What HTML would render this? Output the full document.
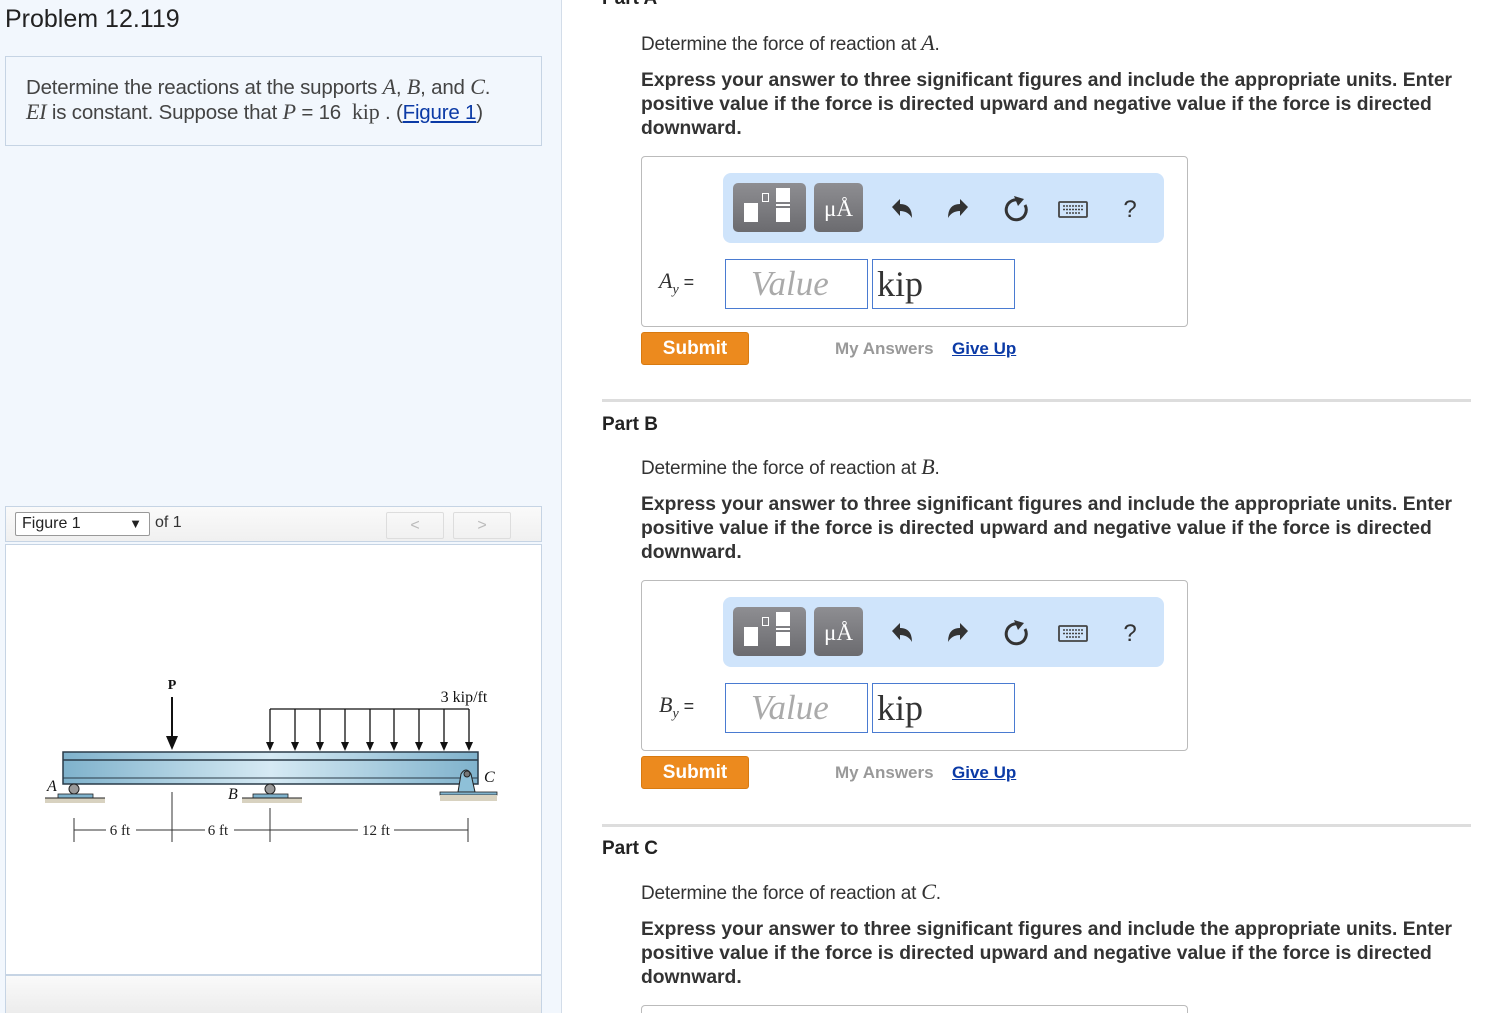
<!DOCTYPE html>
<html><head><meta charset="utf-8"><style>
*{margin:0;padding:0;box-sizing:border-box}
html,body{width:1492px;height:1013px;overflow:hidden}
body{background:#fff;font-family:"Liberation Sans",Arial,sans-serif;color:#333;position:relative}
.abs{position:absolute}
.left{left:0;top:0;width:562px;height:1013px;background:#f2f7fd;border-right:1px solid #d3dde9}
.m{font-family:"Liberation Serif",serif;font-style:italic;font-size:22px}
.ph{font-weight:bold;font-size:19px;color:#222}
.det{font-size:19px;color:#333;letter-spacing:-0.2px}
.exp{font-weight:bold;font-size:19.3px;line-height:24px;color:#333;width:835px}
.box{width:547px;height:171px;border:1px solid #bbb;border-radius:4px;background:#fff}
.tb{width:441px;height:70px;background:#cfe4fb;border-radius:8px}
.gb{background:linear-gradient(#8e8e92,#6b6b6f);border-radius:5px;height:49px}
.inp{height:50px;border:1.5px solid #4a7bd1;background:#fff;font-family:"Liberation Serif",serif;font-size:36px}
.sub{width:108px;height:33px;background:#ec8a1e;border:1px solid #d87a10;border-radius:3px;color:#fff;font-weight:bold;font-size:19px;text-align:center;line-height:31px}
.ma{font-weight:bold;font-size:17px;color:#999}
.gu{font-weight:bold;font-size:17px;color:#0b3aa6;text-decoration:underline}
.hr{left:602px;width:869px;height:3px;background:#ddd}
</style></head><body>
<div class="abs left"></div>
<div class="abs" style="left:5px;top:5px;font-size:25px;color:#222">Problem 12.119</div>
<div class="abs" style="left:5px;top:56px;width:537px;height:90px;border:1px solid #c6d4e4;background:#f2f7fd"></div>
<div class="abs" style="left:26px;top:75px;font-size:20.5px;line-height:24px;color:#444;letter-spacing:-0.2px;white-space:nowrap">Determine the reactions at the supports <span class="m">A</span>, <span class="m">B</span>, and <span class="m">C</span>.<br><span class="m">EI</span> is constant. Suppose that <span class="m">P</span> = 16 &nbsp;<span style="font-family:'Liberation Serif',serif;font-size:22px">kip</span> . (<span style="color:#0b3aa6;text-decoration:underline">Figure 1</span>)</div>

<div class="abs" style="left:5px;top:506px;width:537px;height:36px;border:1px solid #c6d4e4;background:linear-gradient(#fafafa,#f0f0f0)"></div>
<div class="abs" style="left:15px;top:512px;width:135px;height:24px;border:1px solid #999;border-radius:2px;background:#fff;font-size:16px;line-height:22px;padding-left:6px;color:#222">Figure 1<span style="position:absolute;right:7px;font-size:13px">▼</span></div>
<div class="abs" style="left:155px;top:514px;font-size:16px;color:#333">of 1</div>
<div class="abs" style="left:386px;top:512px;width:58px;height:27px;border:1px solid #ddd;border-radius:2px;color:#bbb;text-align:center;line-height:25px;font-size:16px">&lt;</div>
<div class="abs" style="left:453px;top:512px;width:58px;height:27px;border:1px solid #ddd;border-radius:2px;color:#bbb;text-align:center;line-height:25px;font-size:16px">&gt;</div>
<div class="abs" style="left:5px;top:544px;width:537px;height:431px;border:1px solid #c6d4e4;background:#fff"></div>
<div class="abs" style="left:5px;top:975px;width:537px;height:40px;border:1px solid #c6d4e4;background:linear-gradient(#fafafa,#ececec)"></div>

<svg class="abs" style="left:0;top:0" width="562" height="1013" font-family="Liberation Serif,serif">
<defs><linearGradient id="bm" x1="0" x2="1"><stop offset="0" stop-color="#7fb2cc"/><stop offset=".5" stop-color="#d6eaf4"/><stop offset="1" stop-color="#7fb2cc"/></linearGradient></defs>
<rect x="63" y="752" width="415" height="32" fill="url(#bm)" stroke="#2a3b48" stroke-width="1.5"/>
<line x1="63" y1="760" x2="478" y2="760" stroke="#2a3b48" stroke-width="1.5"/>
<line x1="63" y1="778" x2="478" y2="778" stroke="#2a3b48" stroke-width="1"/>
<text x="172" y="689" font-size="14" font-weight="bold" text-anchor="middle" fill="#111">P</text>
<line x1="172" y1="697" x2="172" y2="738" stroke="#111" stroke-width="2"/>
<path d="M166 736 L178 736 L172 750Z" fill="#111"/>
<line x1="270" y1="709" x2="469" y2="709" stroke="#111" stroke-width="1.2"/>
<g stroke="#111" stroke-width="1.3" fill="#111">
<line x1="270" y1="709" x2="270" y2="744"/><line x1="295" y1="709" x2="295" y2="744"/><line x1="320" y1="709" x2="320" y2="744"/><line x1="345" y1="709" x2="345" y2="744"/><line x1="370" y1="709" x2="370" y2="744"/><line x1="394" y1="709" x2="394" y2="744"/><line x1="419" y1="709" x2="419" y2="744"/><line x1="444" y1="709" x2="444" y2="744"/><line x1="469" y1="709" x2="469" y2="744"/>
</g>
<g fill="#111"><path d="M266 742h8l-4 9z"/><path d="M291 742h8l-4 9z"/><path d="M316 742h8l-4 9z"/><path d="M341 742h8l-4 9z"/><path d="M366 742h8l-4 9z"/><path d="M390 742h8l-4 9z"/><path d="M415 742h8l-4 9z"/><path d="M440 742h8l-4 9z"/><path d="M465 742h8l-4 9z"/></g>
<text x="464" y="702" font-size="16" text-anchor="middle" fill="#111">3 kip/ft</text>
<text x="47" y="791" font-size="16" font-style="italic" fill="#111">A</text>
<circle cx="74" cy="789" r="5" fill="#999" stroke="#222"/>
<rect x="58" y="794" width="35" height="4" fill="#7fb2cc" stroke="#222" stroke-width=".8"/>
<rect x="45" y="798" width="60" height="5" fill="#d8d2c0"/>
<line x1="45" y1="798" x2="105" y2="798" stroke="#222"/>
<text x="228" y="799" font-size="16" font-style="italic" fill="#111">B</text>
<circle cx="270" cy="789" r="5" fill="#999" stroke="#222"/>
<rect x="253" y="794" width="35" height="4" fill="#7fb2cc" stroke="#222" stroke-width=".8"/>
<rect x="242" y="798" width="60" height="5" fill="#d8d2c0"/>
<line x1="242" y1="798" x2="302" y2="798" stroke="#222"/>
<path d="M458 792 L461 774 Q466 766 471 774 L475 792Z" fill="#8ec0d8" stroke="#222"/>
<circle cx="467" cy="774" r="3" fill="#777" stroke="#222"/>
<rect x="440" y="792" width="57" height="3" fill="#7fb2cc" stroke="#222" stroke-width=".8"/>
<rect x="440" y="795" width="57" height="6" fill="#d8d2c0"/>
<text x="484" y="782" font-size="16" font-style="italic" fill="#111">C</text>
<g stroke="#333" stroke-width="1">
<line x1="74" y1="818" x2="74" y2="842"/><line x1="172" y1="792" x2="172" y2="842"/><line x1="270" y1="808" x2="270" y2="842"/><line x1="468" y1="818" x2="468" y2="842"/>
<line x1="74" y1="830" x2="106" y2="830"/><line x1="136" y1="830" x2="205" y2="830"/><line x1="234" y1="830" x2="358" y2="830"/><line x1="394" y1="830" x2="468" y2="830"/>
</g>
<text x="120" y="835" font-size="15" text-anchor="middle" fill="#222">6 ft</text>
<text x="218" y="835" font-size="15" text-anchor="middle" fill="#222">6 ft</text>
<text x="376" y="835" font-size="15" text-anchor="middle" fill="#222">12 ft</text>
</svg>

<!-- Part A -->
<div class="abs ph" style="left:602px;top:-12px">Part A</div>
<div class="abs det" style="left:641px;top:30px">Determine the force of reaction at <span class="m">A</span>.</div>
<div class="abs exp" style="left:641px;top:69px">Express your answer to three significant figures and include the appropriate units. Enter positive value if the force is directed upward and negative value if the force is directed downward.</div>
<div class="abs box" style="left:641px;top:156px"></div>
<div class="abs tb" style="left:723px;top:173px"></div>
<div class="abs gb" style="left:733px;top:183px;width:73px"></div>
<div class="abs" style="left:744px;top:203px;width:14px;height:19px;background:#fff"></div>
<div class="abs" style="left:762px;top:193px;width:7px;height:9px;border:1.5px solid #fff"></div>
<div class="abs" style="left:776px;top:188px;width:14px;height:14px;background:#fff"></div>
<div class="abs" style="left:776px;top:204px;width:14px;height:2px;background:#fff"></div>
<div class="abs" style="left:776px;top:208px;width:14px;height:14px;background:#fff"></div>
<div class="abs gb" style="left:814px;top:183px;width:49px;color:#fff;font-family:'Liberation Serif',serif;font-size:23px;text-align:center;line-height:52px">μÅ</div>
<svg class="abs" style="left:880px;top:185px" width="270" height="50">
<path d="M12 22 L20 14 L20 19 Q32 19 32 33 Q28 26 20 26 L20 31Z" fill="#333"/>
<path d="M88 22 L80 14 L80 19 Q68 19 68 33 Q72 26 80 26 L80 31Z" fill="#333"/>
<path d="M141 16 A10 10 0 1 0 145 20" fill="none" stroke="#333" stroke-width="3"/><path d="M134 11 L144 14 L138 21Z" fill="#333"/>
<rect x="179" y="17" width="28" height="15" rx="1" fill="none" stroke="#444" stroke-width="1.8"/>
<path d="M183 21h20M183 24.5h20M186 28h14" stroke="#444" stroke-width="1.5" stroke-dasharray="2 1"/>
<text x="250" y="32" font-family="Liberation Sans" font-size="24" fill="#333" text-anchor="middle">?</text>
</svg>
<div class="abs" style="left:659px;top:268px;font-size:18px;color:#333"><span class="m">A<sub style="font-size:14px">y</sub></span> =</div>
<div class="abs inp" style="left:725px;top:259px;width:143px;color:#aaa;font-style:italic;padding-left:25px;line-height:48px;font-size:35px">Value</div>
<div class="abs inp" style="left:872px;top:259px;width:143px;color:#333;padding-left:4px;line-height:48px">kip</div>
<div class="abs sub" style="left:641px;top:332px">Submit</div>
<div class="abs ma" style="left:835px;top:339px">My Answers</div>
<div class="abs gu" style="left:952px;top:339px">Give Up</div>
<div class="abs hr" style="top:399px"></div>

<!-- Part B -->
<div class="abs ph" style="left:602px;top:414px">Part B</div>
<div class="abs det" style="left:641px;top:454px">Determine the force of reaction at <span class="m">B</span>.</div>
<div class="abs exp" style="left:641px;top:493px">Express your answer to three significant figures and include the appropriate units. Enter positive value if the force is directed upward and negative value if the force is directed downward.</div>
<div class="abs box" style="left:641px;top:580px"></div>
<div class="abs tb" style="left:723px;top:597px"></div>
<div class="abs gb" style="left:733px;top:607px;width:73px"></div>
<div class="abs" style="left:744px;top:627px;width:14px;height:19px;background:#fff"></div>
<div class="abs" style="left:762px;top:617px;width:7px;height:9px;border:1.5px solid #fff"></div>
<div class="abs" style="left:776px;top:612px;width:14px;height:14px;background:#fff"></div>
<div class="abs" style="left:776px;top:628px;width:14px;height:2px;background:#fff"></div>
<div class="abs" style="left:776px;top:632px;width:14px;height:14px;background:#fff"></div>
<div class="abs gb" style="left:814px;top:607px;width:49px;color:#fff;font-family:'Liberation Serif',serif;font-size:23px;text-align:center;line-height:52px">μÅ</div>
<svg class="abs" style="left:880px;top:609px" width="270" height="50">
<path d="M12 22 L20 14 L20 19 Q32 19 32 33 Q28 26 20 26 L20 31Z" fill="#333"/>
<path d="M88 22 L80 14 L80 19 Q68 19 68 33 Q72 26 80 26 L80 31Z" fill="#333"/>
<path d="M141 16 A10 10 0 1 0 145 20" fill="none" stroke="#333" stroke-width="3"/><path d="M134 11 L144 14 L138 21Z" fill="#333"/>
<rect x="179" y="17" width="28" height="15" rx="1" fill="none" stroke="#444" stroke-width="1.8"/>
<path d="M183 21h20M183 24.5h20M186 28h14" stroke="#444" stroke-width="1.5" stroke-dasharray="2 1"/>
<text x="250" y="32" font-family="Liberation Sans" font-size="24" fill="#333" text-anchor="middle">?</text>
</svg>
<div class="abs" style="left:659px;top:692px;font-size:18px;color:#333"><span class="m">B<sub style="font-size:14px">y</sub></span> =</div>
<div class="abs inp" style="left:725px;top:683px;width:143px;color:#aaa;font-style:italic;padding-left:25px;line-height:48px;font-size:35px">Value</div>
<div class="abs inp" style="left:872px;top:683px;width:143px;color:#333;padding-left:4px;line-height:48px">kip</div>
<div class="abs sub" style="left:641px;top:756px">Submit</div>
<div class="abs ma" style="left:835px;top:763px">My Answers</div>
<div class="abs gu" style="left:952px;top:763px">Give Up</div>
<div class="abs hr" style="top:824px"></div>

<!-- Part C -->
<div class="abs ph" style="left:602px;top:838px">Part C</div>
<div class="abs det" style="left:641px;top:879px">Determine the force of reaction at <span class="m">C</span>.</div>
<div class="abs exp" style="left:641px;top:918px">Express your answer to three significant figures and include the appropriate units. Enter positive value if the force is directed upward and negative value if the force is directed downward.</div>
<div class="abs box" style="left:641px;top:1005px;height:8px;border-bottom:none;border-radius:4px 4px 0 0"></div>
</body></html>
